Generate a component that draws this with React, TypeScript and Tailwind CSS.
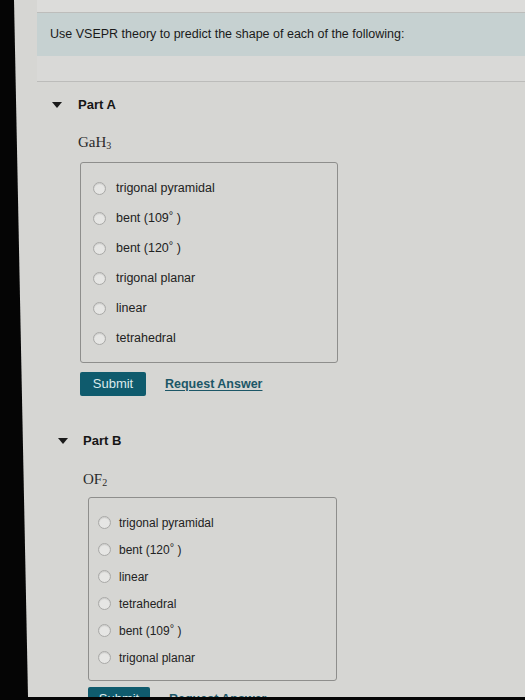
import React from "react";

const Radio = () => (
  <span className="inline-block w-[13px] h-[13px] rounded-full border border-[#a9a9a7] bg-[#e6e6e4] shadow-[inset_0_1px_1px_rgba(0,0,0,0.12)] shrink-0" />
);

const Triangle = () => (
  <svg width="10" height="6" viewBox="0 0 10 6" className="shrink-0">
    <polygon points="0,0 10,0 5,6" fill="#1a1a1a" />
  </svg>
);

const optsA = [
  "trigonal pyramidal",
  "bent (109\u00b0 )",
  "bent (120\u00b0 )",
  "trigonal planar",
  "linear",
  "tetrahedral",
];

const optsB = [
  "trigonal pyramidal",
  "bent (120\u00b0 )",
  "linear",
  "tetrahedral",
  "bent (109\u00b0 )",
  "trigonal planar",
];

const Label = ({ text }: { text: string }) => {
  const m = text.match(/^(.*\()(\d+)(\u00b0)( \))$/);
  if (m) {
    return (
      <span>
        {m[1]}
        {m[2]}
        <span className="text-[11px] relative top-[-3px]">{m[3]}</span>
        {m[4]}
      </span>
    );
  }
  return <span>{text}</span>;
};

export default function App() {
  return (
    <div className="relative w-[525px] h-[700px] overflow-hidden bg-[#d6d6d3] font-['Liberation_Sans',Arial,sans-serif] text-[#222]">
      <div className="pl-[37px]">
        <div className="h-[13px] bg-[#dcdcda] border-b border-[#bdbdbb]" />
        <div className="h-[43px] bg-[#c6d1d1] pl-[13px] flex items-center text-[12.5px] text-[#1a1a1a]">
          Use VSEPR theory to predict the shape of each of the following:
        </div>
        <div className="h-[26px] bg-[#d9d9d7] border-b border-[#bcbcba]" />

        {/* Part A */}
        <div className="flex items-center h-[20px] mt-[13px]">
          <span className="ml-[15px]">
            <Triangle />
          </span>
          <span className="ml-[16px] text-[13px] font-bold text-[#151515]">Part A</span>
        </div>
        <div className="h-[20px] mt-[17px] ml-[41px] flex items-center font-['Liberation_Serif',serif] text-[15px] text-[#2a2a2a]">
          GaH<span className="text-[10px] relative top-[3px]">3</span>
        </div>
        <div className="mt-[10px] ml-[43px] w-[258px] border border-[#8e8e8c] rounded-[3px] pt-[10px] pb-[9px] pl-[12px]">
          {optsA.map((o) => (
            <div key={o} className="h-[30px] flex items-center gap-[10px] text-[12.5px] text-[#222]">
              <Radio />
              <Label text={o} />
            </div>
          ))}
        </div>
        <div className="mt-[9px] ml-[43px] flex items-center">
          <div className="w-[66px] h-[24px] bg-[#0f5b6d] rounded-[2px] flex items-center justify-center text-[13px] text-[#dceaec]">
            Submit
          </div>
          <span className="ml-[19px] text-[12.5px] font-bold text-[#1c5767] underline underline-offset-2">
            Request Answer
          </span>
        </div>

        {/* Part B */}
        <div className="flex items-center h-[20px] mt-[35px]">
          <span className="ml-[21px]">
            <Triangle />
          </span>
          <span className="ml-[15px] text-[13px] font-bold text-[#151515]">Part B</span>
        </div>
        <div className="h-[20px] mt-[18px] ml-[46px] flex items-center font-['Liberation_Serif',serif] text-[15px] text-[#2a2a2a]">
          OF<span className="text-[10px] relative top-[3px]">2</span>
        </div>
        <div className="mt-[8px] ml-[51px] w-[249px] border border-[#8e8e8c] rounded-[3px] pt-[11px] pb-[9px] pl-[9px]">
          {optsB.map((o) => (
            <div key={o} className="h-[27px] flex items-center gap-[8px] text-[12px] text-[#222]">
              <Radio />
              <Label text={o} />
            </div>
          ))}
        </div>
        <div className="mt-[6px] ml-[51px] flex items-center">
          <div className="w-[62px] h-[24px] bg-[#0f5b6d] rounded-[2px] flex items-center justify-center text-[13px] text-[#dceaec]">
            Submit
          </div>
          <span className="ml-[19px] text-[12.5px] font-bold text-[#1c5767] underline underline-offset-2">
            Request Answer
          </span>
        </div>
      </div>

      <svg className="absolute inset-0 pointer-events-none" width="525" height="700" viewBox="0 0 525 700">
        <polygon points="0,0 14,0 28,697 0,697" fill="#050505" />
        <rect x="0" y="697" width="525" height="3" fill="#050505" />
      </svg>
    </div>
  );
}
